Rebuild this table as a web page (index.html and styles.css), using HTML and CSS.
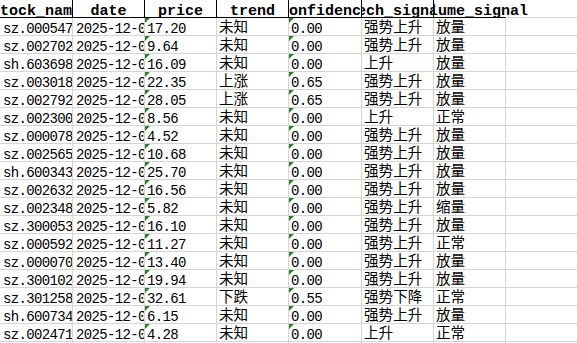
FILE: index.html
```html
<!DOCTYPE html>
<html lang="zh">
<head>
<meta charset="utf-8">
<title>sheet</title>
<link rel="stylesheet" href="styles.css">
</head>
<body>
<div class="sheet">
  <div class="c h"><span>stock_name</span></div>
  <div class="c h"><span>date</span></div>
  <div class="c h"><span>price</span></div>
  <div class="c h"><span>trend</span></div>
  <div class="c h"><span>confidence</span></div>
  <div class="c h"><span>tech_signal</span></div>
  <div class="c h last"><span>volume_signal</span></div>
  <div class="c"></div>

  <div class="c code">sz.000547</div><div class="c">2025-12-05</div><div class="c tri">17.20</div><div class="c cjk">未知</div><div class="c tri">0.00</div><div class="c cjk">强势上升</div><div class="c cjk">放量</div><div class="c"></div>
  <div class="c code">sz.002702</div><div class="c">2025-12-05</div><div class="c tri">9.64</div><div class="c cjk">未知</div><div class="c tri">0.00</div><div class="c cjk">强势上升</div><div class="c cjk">放量</div><div class="c"></div>
  <div class="c code">sh.603698</div><div class="c">2025-12-05</div><div class="c tri">16.09</div><div class="c cjk">未知</div><div class="c tri">0.00</div><div class="c cjk">上升</div><div class="c cjk">放量</div><div class="c"></div>
  <div class="c code">sz.003018</div><div class="c">2025-12-05</div><div class="c tri">22.35</div><div class="c cjk">上涨</div><div class="c tri">0.65</div><div class="c cjk">强势上升</div><div class="c cjk">放量</div><div class="c"></div>
  <div class="c code">sz.002792</div><div class="c">2025-12-05</div><div class="c tri">28.05</div><div class="c cjk">上涨</div><div class="c tri">0.65</div><div class="c cjk">强势上升</div><div class="c cjk">放量</div><div class="c"></div>
  <div class="c code">sz.002300</div><div class="c">2025-12-05</div><div class="c tri">8.56</div><div class="c cjk">未知</div><div class="c tri">0.00</div><div class="c cjk">上升</div><div class="c cjk">正常</div><div class="c"></div>
  <div class="c code">sz.000078</div><div class="c">2025-12-05</div><div class="c tri">4.52</div><div class="c cjk">未知</div><div class="c tri">0.00</div><div class="c cjk">强势上升</div><div class="c cjk">放量</div><div class="c"></div>
  <div class="c code">sz.002565</div><div class="c">2025-12-05</div><div class="c tri">10.68</div><div class="c cjk">未知</div><div class="c tri">0.00</div><div class="c cjk">强势上升</div><div class="c cjk">放量</div><div class="c"></div>
  <div class="c code">sh.600343</div><div class="c">2025-12-05</div><div class="c tri">25.70</div><div class="c cjk">未知</div><div class="c tri">0.00</div><div class="c cjk">强势上升</div><div class="c cjk">放量</div><div class="c"></div>
  <div class="c code">sz.002632</div><div class="c">2025-12-05</div><div class="c tri">16.56</div><div class="c cjk">未知</div><div class="c tri">0.00</div><div class="c cjk">强势上升</div><div class="c cjk">放量</div><div class="c"></div>
  <div class="c code">sz.002348</div><div class="c">2025-12-05</div><div class="c tri">5.82</div><div class="c cjk">未知</div><div class="c tri">0.00</div><div class="c cjk">强势上升</div><div class="c cjk">缩量</div><div class="c"></div>
  <div class="c code">sz.300053</div><div class="c">2025-12-05</div><div class="c tri">16.10</div><div class="c cjk">未知</div><div class="c tri">0.00</div><div class="c cjk">强势上升</div><div class="c cjk">放量</div><div class="c"></div>
  <div class="c code">sz.000592</div><div class="c">2025-12-05</div><div class="c tri">11.27</div><div class="c cjk">未知</div><div class="c tri">0.00</div><div class="c cjk">强势上升</div><div class="c cjk">正常</div><div class="c"></div>
  <div class="c code">sz.000070</div><div class="c">2025-12-05</div><div class="c tri">13.40</div><div class="c cjk">未知</div><div class="c tri">0.00</div><div class="c cjk">强势上升</div><div class="c cjk">放量</div><div class="c"></div>
  <div class="c code">sz.300102</div><div class="c">2025-12-05</div><div class="c tri">19.94</div><div class="c cjk">未知</div><div class="c tri">0.00</div><div class="c cjk">强势上升</div><div class="c cjk">放量</div><div class="c"></div>
  <div class="c code">sz.301258</div><div class="c">2025-12-05</div><div class="c tri">32.61</div><div class="c cjk">下跌</div><div class="c tri">0.55</div><div class="c cjk">强势下降</div><div class="c cjk">正常</div><div class="c"></div>
  <div class="c code">sh.600734</div><div class="c">2025-12-05</div><div class="c tri">6.15</div><div class="c cjk">未知</div><div class="c tri">0.00</div><div class="c cjk">强势上升</div><div class="c cjk">放量</div><div class="c"></div>
  <div class="c code">sz.002471</div><div class="c">2025-12-05</div><div class="c tri">4.28</div><div class="c cjk">未知</div><div class="c tri">0.00</div><div class="c cjk">上升</div><div class="c cjk">正常</div><div class="c"></div>

  <div class="c"></div><div class="c"></div><div class="c"></div><div class="c"></div><div class="c"></div><div class="c"></div><div class="c"></div><div class="c"></div>
</div>
</body>
</html>
```

FILE: styles.css
```css
html, body {
  margin: 0;
  padding: 0;
  background: #ffffff;
  overflow: hidden;
}

.sheet {
  display: grid;
  grid-template-columns: 73px 72px 72px 72px 73px 72px 72px 72px;
  grid-auto-rows: 18px;
  font-family: "Liberation Mono", "Noto Sans CJK SC", monospace;
  color: #000;
}

.c {
  position: relative;
  box-sizing: border-box;
  height: 18px;
  border-right: 1px solid #d4d4d4;
  border-bottom: 1px solid #d4d4d4;
  overflow: hidden;
  white-space: nowrap;
  padding: 3px 0 0 3px;
  font-size: 14px;
  letter-spacing: -0.65px;
  line-height: 17px;
}

.c.tri {
  padding-left: 2px;
}

.c.tri::before {
  content: "";
  position: absolute;
  left: 0;
  top: 0;
  width: 0;
  height: 0;
  border-top: 5px solid #1e8a1e;
  border-right: 5px solid transparent;
}

.c.cjk {
  font-family: "Noto Sans CJK SC", sans-serif;
  font-size: 14.6px;
  letter-spacing: 0;
  line-height: 16px;
  padding: 0 0 0 2px;
}

.c.h {
  display: flex;
  justify-content: center;
  padding: 3px 0 0 0;
  font-family: "Liberation Mono", monospace;
  font-weight: bold;
  font-size: 15px;
  letter-spacing: 0;
  line-height: 17px;
  border-right-color: #000;
  border-bottom-color: #000;
}

.c.h span {
  flex: none;
}

.c.h.last {
  overflow: visible;
  border-right-color: transparent;
  clip-path: inset(0 -200px 0 0);
}
```
